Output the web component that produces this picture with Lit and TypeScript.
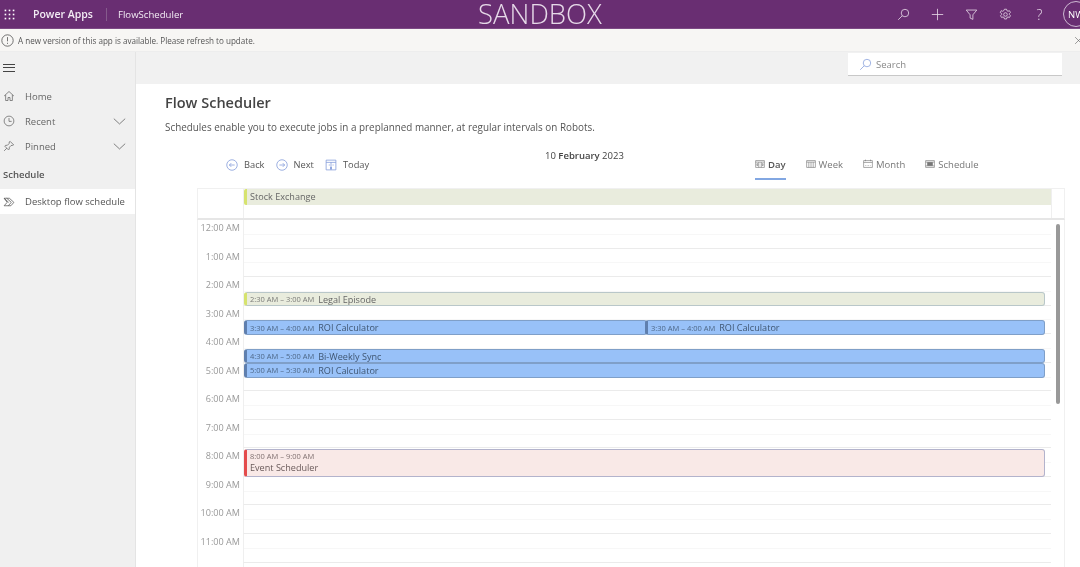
import { LitElement, html, css, svg } from 'lit';
import { customElement } from 'lit/decorators.js';

const ROW_H = 28.55;

const HOURS = [
  '12:00 AM', '1:00 AM', '2:00 AM', '3:00 AM', '4:00 AM', '5:00 AM', '6:00 AM',
  '7:00 AM', '8:00 AM', '9:00 AM', '10:00 AM', '11:00 AM', '12:00 PM',
];

interface CalEvent {
  time: string;
  title: string;
  start: number;
  end: number;
  kind: 'green' | 'blue' | 'red';
  left: number;
  width: number;
  stacked?: boolean;
}

// left and width are in px inside the events layer
const EVENTS: CalEvent[] = [
  { time: '2:30 AM – 3:00 AM', title: 'Legal Episode', start: 2.5, end: 3, kind: 'green', left: 1, width: 801 },
  { time: '3:30 AM – 4:00 AM', title: 'ROI Calculator', start: 3.5, end: 4, kind: 'blue', left: 1, width: 403 },
  { time: '3:30 AM – 4:00 AM', title: 'ROI Calculator', start: 3.5, end: 4, kind: 'blue', left: 402, width: 400 },
  { time: '4:30 AM – 5:00 AM', title: 'Bi-Weekly Sync', start: 4.5, end: 5, kind: 'blue', left: 1, width: 801 },
  { time: '5:00 AM – 5:30 AM', title: 'ROI Calculator', start: 5, end: 5.5, kind: 'blue', left: 1, width: 801 },
  { time: '8:00 AM – 9:00 AM', title: 'Event Scheduler', start: 8, end: 9, kind: 'red', left: 1, width: 801, stacked: true },
];

const icon = (size: number, body: unknown, color = 'currentColor') => html`
  <svg width=${size} height=${size} viewBox="0 0 16 16" fill="none" stroke=${color} stroke-width="1">${body}</svg>
`;

const waffle = svg`${[3, 8, 13].flatMap((y) =>
  [3, 8, 13].map((x) => svg`<rect x=${x - 1} y=${y - 1} width="2" height="2" fill="#fff" stroke="none"></rect>`)
)}`;
const search = svg`<circle cx="9.8" cy="6.2" r="4.6"></circle><path d="M6.4 9.6 1.5 14.5"></path>`;
const plus = svg`<path d="M8 1v14M1 8h14"></path>`;
const funnel = svg`<path d="M1.5 2.5h13L9.7 8.4V14l-3.4-1.6V8.4z"></path>`;
const gear = svg`<path d="M6.7 1.5h2.6l.4 1.8 1.4.7 1.7-.7 1.3 2.2-1.3 1.3v1.4l1.3 1.3-1.3 2.2-1.7-.7-1.4.7-.4 1.8H6.7l-.4-1.8-1.4-.7-1.7.7-1.3-2.2 1.3-1.3V6.8L1.5 5.5l1.3-2.2 1.7.7 1.4-.7z"></path><circle cx="8" cy="8" r="2.2"></circle>`;
const home = svg`<path d="M1.5 8 8 2l6.500 6M3.500 6.500V14h3.200v-4h2.600v4h3.200V6.500"></path>`;
const clock = svg`<circle cx="8" cy="8" r="6.500"></circle><path d="M8 4v4.500h3.500"></path>`;
const pin = svg`<path d="m9.500 1.800 4.700 4.700-1.200.6-2.300.3-2.200 2.200-.2 2.600-1 1-5-5 1-1 2.600-.2 2.200-2.200.3-2.300zM5.200 10.800 1.500 14.500"></path>`;
const chevron = svg`<path d="M1 4.500 8 11l7-6.500"></path>`;
const flow = svg`<path d="M1.500 3h7l6 5.500-4 4.500h-9l4-4.500zM1.500 3l6 5.500M5 3l6 5.500-4 4.500"></path>`;
const info = svg`<circle cx="8" cy="8" r="7"></circle><path d="M8 3.800v5.200M8 10.800v1.400"></path>`;
const close = svg`<path d="m2 2 12 12M14 2 2 14"></path>`;
const back = svg`<circle cx="8" cy="8" r="7"></circle><path d="M11.500 8h-7M7 5.500 4.500 8 7 10.500"></path>`;
const next = svg`<circle cx="8" cy="8" r="7"></circle><path d="M4.500 8h7M9 5.500 11.500 8 9 10.500"></path>`;
const today = svg`<path d="M1.500 1.500h13v13h-13zM1.500 4.500h13M8 4.500v10M5 8h1.500M10 8h1.500"></path><path d="M8 10.500v3" stroke-width="2"></path>`;
const calDay = svg`<path d="M1 2.500h14v11H1zM1 5h14M6 5v8.500M10 5v8.500"></path><path d="M3 7.500h1.500v3H3zM11.500 7.500H13v3h-1.500z"></path>`;
const calWeek = svg`<path d="M1 2.500h14v11H1zM1 5h14M4.500 5v8.500M8 5v8.500M11.500 5v8.500"></path>`;
const calMonth = svg`<path d="M1 2.500h14v11H1zM1 5.500h14M4 1v2.500M12 1v2.500"></path><path d="M3.500 10.500h9" stroke-dasharray="1 1.500"></path>`;
const calSched = svg`<path d="M1 2.500h14v11H1zM1 5h14M1 11h14"></path><rect x="3.500" y="5" width="9" height="6" fill="currentColor" stroke="none"></rect>`;

@customElement('app-root')
export class AppRoot extends LitElement {
  static styles = css`
    :host {
      display: block;
      width: 1080px;
      height: 567px;
      overflow: hidden;
      background: #fff;
      font-family: 'Open Sans', 'Noto Sans', sans-serif;
      color: #444;
      filter: blur(0.4px);
    }

    svg {
      display: block;
      flex: none;
    }

    .header {
      height: 29px;
      box-sizing: border-box;
      border-bottom: 1px solid #7d4a85;
      background: #692e72;
      color: #f3ecf4;
      display: grid;
      grid-template-columns: 1fr auto 1fr;
      align-items: center;
    }

    .header-left {
      display: flex;
      align-items: center;
      padding-left: 3px;
      font-size: 10.500px;
    }

    .brand {
      margin-left: 17px;
      font-weight: 600;
      width: 73px;
      white-space: nowrap;
    }

    .app-name {
      border-left: 1px solid #855a8c;
      padding-left: 11px;
      font-size: 9.600px;
      white-space: nowrap;
    }

    .sandbox {
      font-size: 27.500px;
      font-weight: 300;
      line-height: 26px;
      color: #e6d9e8;
    }

    .header-right {
      display: flex;
      justify-content: flex-end;
      align-items: center;
      gap: 21px;
      margin-right: -9px;
      color: #e6d9e8;
    }

    .help {
      width: 13px;
      text-align: center;
      font-size: 14px;
      font-weight: 300;
    }

    .avatar {
      width: 26px;
      height: 26px;
      margin-left: -4px;
      border: 1px solid #cdb8d1;
      border-radius: 50%;
      box-sizing: border-box;
      font-size: 9.500px;
      display: flex;
      align-items: center;
      justify-content: center;
      color: #fff;
    }

    .notice {
      height: 23px;
      box-sizing: border-box;
      padding: 0 0 0 1px;
      border-bottom: 1px solid #ededed;
      background: #f7f6f4;
      display: flex;
      align-items: center;
      gap: 4px;
      font-size: 8.100px;
      color: #555;
    }

    .notice .spacer {
      flex: 1;
    }

    .notice .close {
      margin-right: -3px;
      color: #555;
    }

    .body {
      display: flex;
      height: 515px;
    }

    .sidebar {
      width: 136px;
      flex: none;
      box-sizing: border-box;
      border-right: 1px solid #e4e4e4;
      background: #f0f0f0;
      font-size: 9.500px;
      color: #555;
    }

    .burger {
      height: 31.500px;
      padding-left: 3px;
      display: flex;
      align-items: center;
    }

    .burger span {
      display: block;
      width: 12px;
      height: 6px;
      border-top: 1px solid #444;
      border-bottom: 1px solid #444;
    }

    .burger span::after {
      content: '';
      display: block;
      margin-top: 2.500px;
      border-top: 1px solid #444;
    }

    .nav-item {
      height: 25px;
      display: flex;
      align-items: center;
      padding: 0 9px 0 3px;
      gap: 10px;
      color: #666;
    }

    .nav-item .label {
      flex: 1;
      white-space: nowrap;
    }

    .nav-head {
      height: 25px;
      margin-top: 3.500px;
      padding-left: 3px;
      display: flex;
      align-items: center;
      font-weight: 600;
      color: #555;
    }

    .nav-item.active {
      margin-top: 2px;
      background: #fff;
      color: #555;
    }

    .main {
      flex: 1;
      min-width: 0;
    }

    .topbar {
      height: 32px;
      background: #f1f1f1;
      display: flex;
      justify-content: flex-end;
      padding-right: 18px;
    }

    .search {
      width: 214px;
      height: 23px;
      margin-top: 1px;
      box-sizing: border-box;
      padding-left: 11px;
      border-bottom: 1px solid #c8c8c8;
      background: #fff;
      display: flex;
      align-items: center;
      gap: 4px;
      font-size: 9.500px;
      color: #888;
    }

    .search svg {
      color: #8ba3dc;
    }

    .content {
      padding: 9px 0 0 29px;
    }

    h1 {
      margin: 0;
      font-size: 14.500px;
      line-height: 20px;
      font-weight: 600;
      color: #444;
    }

    .desc {
      margin: 7px 0 0;
      font-size: 9.900px;
      line-height: 14px;
      color: #555;
      white-space: nowrap;
    }

    .toolbar {
      margin: 22px 0 0 61px;
      height: 32px;
      display: grid;
      grid-template-columns: 319px 210px auto;
      font-size: 9.300px;
    }

    .nav-btns {
      display: flex;
      align-items: flex-start;
      padding-top: 2px;
      gap: 11px;
      color: #555;
    }

    .nav-btn {
      display: flex;
      align-items: center;
      gap: 6px;
      height: 13px;
    }

    .nav-btn svg {
      color: #7d97d8;
    }

    .date {
      font-size: 9.500px;
      line-height: 13px;
      margin-top: -7px;
      color: #444;
    }

    .date b {
      font-weight: 600;
    }

    .tabs {
      display: flex;
      gap: 20px;
      font-size: 9.500px;
      color: #777;
    }

    .tab {
      height: 21px;
      margin-top: 1px;
      display: flex;
      align-items: flex-start;
      gap: 3px;
      line-height: 15px;
    }

    .tab svg {
      margin-top: 2px;
      color: #777;
    }

    .tab.active {
      border-bottom: 2px solid #82a7e2;
      font-weight: 600;
      color: #555;
    }

    .calendar {
      margin-left: 32px;
      width: 868px;
    }

    .all-day {
      height: 32px;
      box-sizing: border-box;
      border: 1px solid #f0f0f0;
      border-bottom: 2px solid #e6e6e6;
      display: grid;
      grid-template-columns: 45px 808px 1fr;
    }

    .all-day .cell {
      border-left: 1px solid #efefef;
    }

    .banner {
      height: 16px;
      box-sizing: border-box;
      border-left: 3px solid #d6e36e;
      border-radius: 2px 0 0 2px;
      background: #e9ecdd;
      padding-left: 3px;
      font-size: 9.100px;
      line-height: 16px;
      color: #666;
    }

    .grid {
      position: relative;
      border-left: 1px solid #f0f0f0;
      border-right: 1px solid #f0f0f0;
    }

    .row {
      height: ${ROW_H}px;
      box-sizing: border-box;
      display: grid;
      grid-template-columns: 45px 808px;
    }

    .time {
      padding: 1px 3px 0 0;
      text-align: right;
      font-size: 9.100px;
      line-height: 14px;
      color: #999;
      white-space: nowrap;
    }

    .slot {
      border-left: 1px solid #efefef;
      border-bottom: 1px solid #ebebeb;
      box-sizing: border-box;
      display: flex;
      flex-direction: column;
    }

    .slot div {
      height: 50%;
      border-bottom: 1px solid #f7f7f7;
    }

    .events {
      position: absolute;
      left: 45px;
      top: 0.500px;
      width: 808px;
    }

    .event {
      position: absolute;
      box-sizing: border-box;
      border: 1px solid;
      border-left-width: 3px;
      border-radius: 3px;
      padding-left: 3px;
      display: flex;
      align-items: center;
      gap: 4px;
      white-space: nowrap;
      overflow: hidden;
      font-size: 9.100px;
    }

    .event .when {
      font-size: 7.500px;
      opacity: 0.85;
    }

    .event.stacked {
      flex-direction: column;
      align-items: flex-start;
      justify-content: flex-start;
      padding-top: 1px;
      gap: 0;
      line-height: 11.500px;
    }

    .event.green {
      background: #e9ecdd;
      border-color: #b9c7c9;
      border-left-color: #d6e36e;
      color: #666;
    }

    .event.blue {
      background: #98c1f8;
      border-color: #7f9fc8;
      border-left-color: #5f7fae;
      color: #3f5672;
    }

    .event.red {
      background: #f9e9e7;
      border-color: #b3b3cc;
      border-left-color: #e44b4b;
      color: #6a5a5a;
    }

    .scrollbar {
      position: absolute;
      right: 4px;
      top: 4px;
      width: 4px;
      height: 180px;
      border-radius: 2px;
      background: #999;
    }
  `;

  private renderEvent(e: CalEvent) {
    const top = e.start * ROW_H;
    const height = (e.end - e.start) * ROW_H;
    const pos = `top:${top}px;height:${height}px;left:${e.left}px;width:${e.width}px`;
    return html`
      <div class="event ${e.kind} ${e.stacked ? 'stacked' : ''}" style=${pos}>
        <span class="when">${e.time}</span><span>${e.title}</span>
      </div>
    `;
  }

  render() {
    return html`
      <div class="header">
        <div class="header-left">
          ${icon(13, waffle)}
          <span class="brand">Power Apps</span>
          <span class="app-name">FlowScheduler</span>
        </div>
        <div class="sandbox">SANDBOX</div>
        <div class="header-right">
          ${icon(13, search)} ${icon(13, plus)} ${icon(13, funnel)} ${icon(13, gear)}
          <span class="help">?</span>
          <span class="avatar">NW</span>
        </div>
      </div>
      <div class="notice">
        ${icon(13, info)}
        <span>A new version of this app is available. Please refresh to update.</span>
        <span class="spacer"></span>
        <span class="close">${icon(9, close)}</span>
      </div>
      <div class="body">
        <aside class="sidebar">
          <div class="burger"><span></span></div>
          <div class="nav-item">${icon(12, home)}<span class="label">Home</span></div>
          <div class="nav-item">${icon(12, clock)}<span class="label">Recent</span>${icon(13, chevron)}</div>
          <div class="nav-item">${icon(12, pin)}<span class="label">Pinned</span>${icon(13, chevron)}</div>
          <div class="nav-head">Schedule</div>
          <div class="nav-item active">${icon(12, flow)}<span class="label">Desktop flow schedule</span></div>
        </aside>
        <main class="main">
          <div class="topbar">
            <div class="search">${icon(13, search)}<span>Search</span></div>
          </div>
          <div class="content">
            <h1>Flow Scheduler</h1>
            <p class="desc">Schedules enable you to execute jobs in a preplanned manner, at regular intervals on Robots.</p>
            <div class="toolbar">
              <div class="nav-btns">
                <span class="nav-btn">${icon(12, back)}Back</span>
                <span class="nav-btn">${icon(12, next)}Next</span>
                <span class="nav-btn">${icon(12, today)}Today</span>
              </div>
              <div class="date">10 <b>February</b> 2023</div>
              <div class="tabs">
                <span class="tab active">${icon(10, calDay)}Day</span>
                <span class="tab">${icon(10, calWeek)}Week</span>
                <span class="tab">${icon(10, calMonth)}Month</span>
                <span class="tab">${icon(10, calSched)}Schedule</span>
              </div>
            </div>
            <div class="calendar">
              <div class="all-day">
                <div></div>
                <div class="cell"><div class="banner">Stock Exchange</div></div>
                <div class="cell"></div>
              </div>
              <div class="grid">
                ${HOURS.map(
                  (h) => html`
                    <div class="row">
                      <div class="time">${h}</div>
                      <div class="slot"><div></div></div>
                    </div>
                  `
                )}
                <div class="events">${EVENTS.map((e) => this.renderEvent(e))}</div>
                <div class="scrollbar"></div>
              </div>
            </div>
          </div>
        </main>
      </div>
    `;
  }
}
